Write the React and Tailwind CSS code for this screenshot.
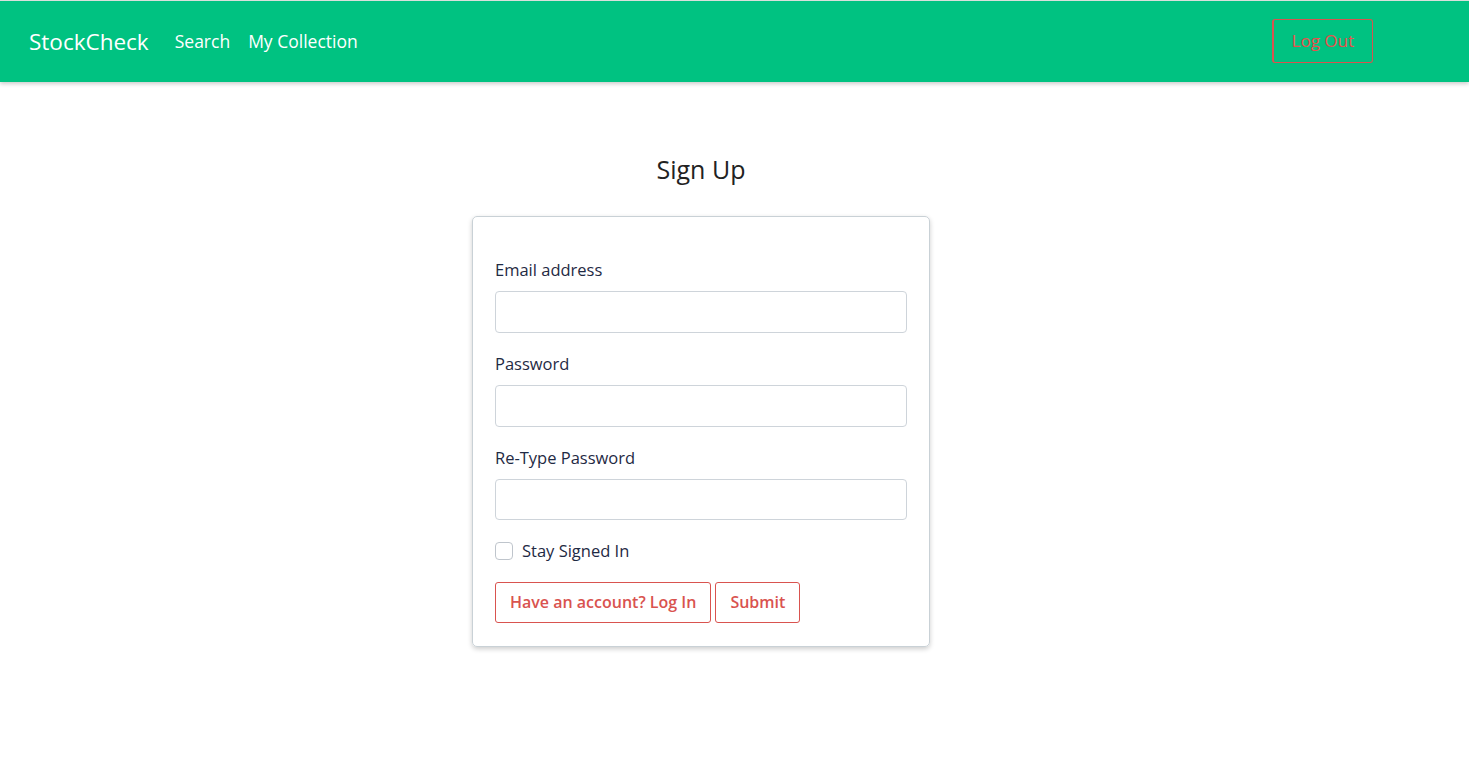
import { useState } from "react";

export default function App() {
  const [email, setEmail] = useState("");
  const [password, setPassword] = useState("");
  const [confirm, setConfirm] = useState("");
  const [stay, setStay] = useState(false);

  return (
    <div className="min-h-screen bg-white text-[#1f2a44]" style={{ fontFamily: '"Open Sans", "Noto Sans", sans-serif' }}>
      {/* navbar */}
      <nav className="h-[82px] bg-[#00c281] border-t border-[#d8e0dc] shadow-[0_2px_4px_rgba(0,0,0,0.2)] flex items-center pl-[29px] pr-[96px]">
        <span className="text-[22.5px] text-white mr-[26px]">StockCheck</span>
        <a className="text-[17.5px] text-white mr-[18px]">Search</a>
        <a className="text-[17.5px] text-white">My Collection</a>
        <button className="ml-auto h-[44px] mb-[1px] px-[18px] border border-[#d9534f] border-l-2 rounded-[3px] text-[17px] text-[#e8504c]">
          Log Out
        </button>
      </nav>

      <div className="flex flex-col items-center pr-[67px]">
        <h2 className="mt-[69px] text-[25px] text-[#222]">Sign Up</h2>

        <form
          onSubmit={(e) => e.preventDefault()}
          className="mt-[27px] w-[458px] border border-[#c9d1d6] rounded-[5px] shadow-[0_2px_5px_rgba(0,0,0,0.2)] px-[22px] pt-[41px] pb-[23px]"
        >
          <label className="block text-[16.5px] leading-[24px] mb-[9px]">Email address</label>
          <input
            type="email"
            value={email}
            onChange={(e) => setEmail(e.target.value)}
            className="block w-full h-[42px] border border-[#ced4da] rounded-[4px] px-3 mb-[19px] outline-none"
          />

          <label className="block text-[16.5px] leading-[24px] mb-[9px]">Password</label>
          <input
            type="password"
            value={password}
            onChange={(e) => setPassword(e.target.value)}
            className="block w-full h-[42px] border border-[#ced4da] rounded-[4px] px-3 mb-[19px] outline-none"
          />

          <label className="block text-[16.5px] leading-[24px] mb-[9px]">Re-Type Password</label>
          <input
            type="password"
            value={confirm}
            onChange={(e) => setConfirm(e.target.value)}
            className="block w-full h-[41px] border border-[#ced4da] rounded-[4px] px-3 outline-none"
          />

          <label className="flex items-center gap-[9px] mt-[19px] text-[16.5px] leading-[24px]">
            <input
              type="checkbox"
              checked={stay}
              onChange={(e) => setStay(e.target.checked)}
              className="appearance-none w-[18px] h-[18px] border border-[#bfc5cc] rounded-[4px] bg-white"
            />
            Stay Signed In
          </label>

          <div className="flex gap-[4px] mt-[19px]">
            <button type="button" className="h-[41px] px-[14px] border border-[#d9534f] rounded-[3px] text-[16px] font-semibold text-[#d9534f]">
              Have an account? Log In
            </button>
            <button type="submit" className="h-[41px] px-[14px] border border-[#d9534f] rounded-[3px] text-[16px] font-semibold text-[#d9534f]">
              Submit
            </button>
          </div>
        </form>
      </div>
    </div>
  );
}
